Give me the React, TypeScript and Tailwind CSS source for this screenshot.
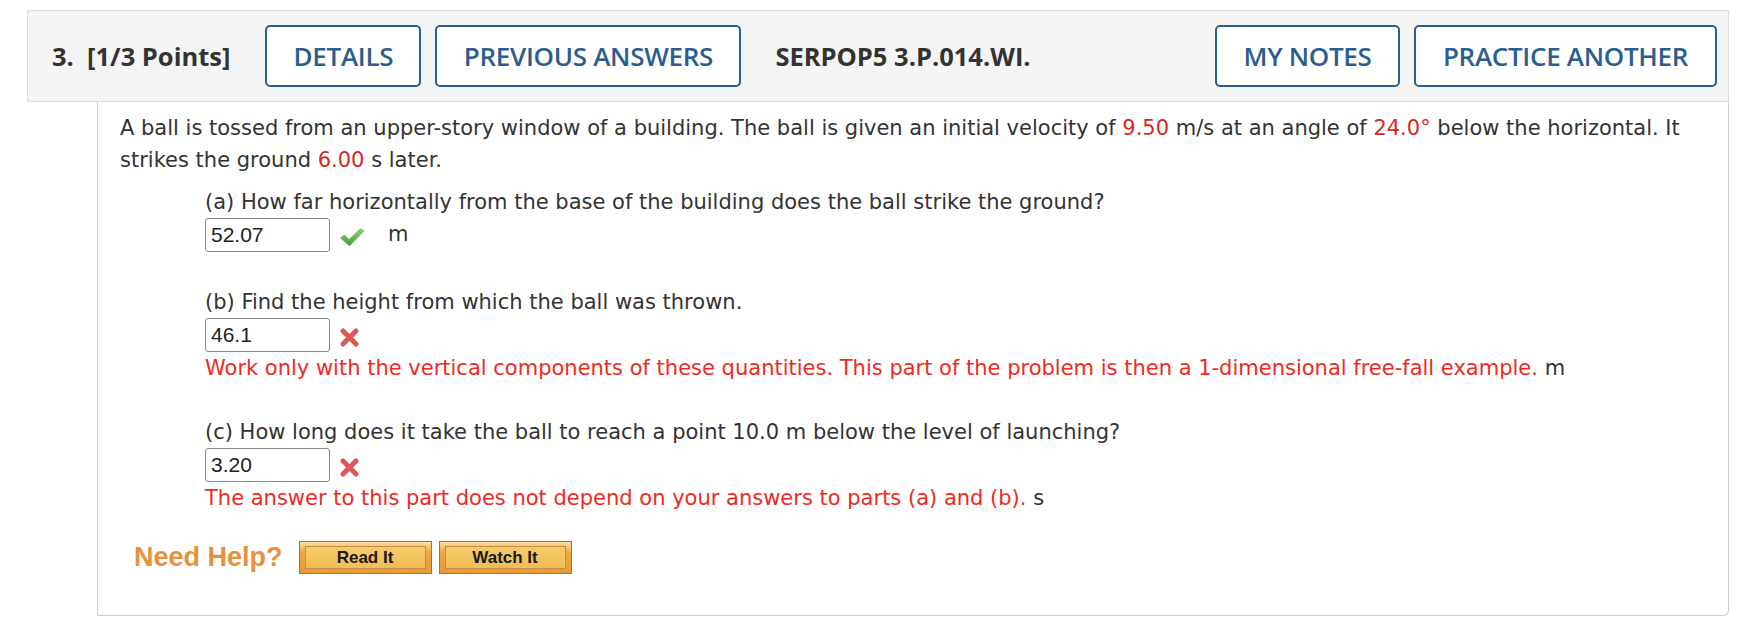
function HeaderButton({ label, width }: { label: string; width: string }) {
  return (
    <button
      className={`${width} h-[62px] rounded-[5px] border-2 border-[#2a5f93] bg-white text-[26px] font-semibold text-[#2b5d8f] tracking-[-0.3px]`}
    >
      {label}
    </button>
  );
}

function CheckIcon() {
  return (
    <svg width="26" height="22" viewBox="0 0 26 22">
      <defs>
        <linearGradient id="chk" x1="0" y1="0" x2="0" y2="1">
          <stop offset="0" stopColor="#93d47e" />
          <stop offset="1" stopColor="#3f9a3b" />
        </linearGradient>
      </defs>
      <path
        d="M1.5 12 L5.5 9 L10 13.5 L21.5 2.5 L25 5 L10.5 20 Z"
        fill="url(#chk)"
        stroke="#5aa94c"
        strokeWidth="0.6"
        strokeLinejoin="round"
      />
    </svg>
  );
}

function CrossIcon() {
  return (
    <svg width="21" height="21" viewBox="0 0 21 21">
      <path
        d="M4 4 L17 17 M17 4 L4 17"
        stroke="#e05656"
        strokeWidth="5"
        strokeLinecap="round"
      />
    </svg>
  );
}

function AnswerBox({ value }: { value: string }) {
  return (
    <div className="w-[125px] h-[34px] rounded-[3px] border border-[#8a8a8a] bg-white px-[5px] flex items-center font-['Liberation_Sans',Arial,sans-serif] text-[21px] text-[#222]">
      {value}
    </div>
  );
}

function HelpButton({ label }: { label: string }) {
  return (
    <button className="w-[133px] h-[33px] border border-[#a8732f] bg-[linear-gradient(#fcdca0,#eda648_35%,#e89a38)] px-[5px] py-[4px]">
      <span className="flex h-full w-full items-center justify-center border border-[#c58b3f] bg-[linear-gradient(#f6cb6c,#f1bd55)] font-['Liberation_Sans',Arial,sans-serif] text-[17px] font-bold text-[#1a1a1a]">
        {label}
      </span>
    </button>
  );
}

export default function App() {
  return (
    <div className="w-[1738px] h-[629px] bg-white pt-[10px] pl-[27px] pr-[9px]">
      <div className="h-[92px] flex items-center border border-[#dcdcdc] bg-[#f5f5f5] pl-[24px] pr-[11px] font-['Open_Sans',sans-serif] text-[#333]">
        <span className="text-[25.5px] font-bold mr-[35px]">3.&nbsp; [1/3 Points]</span>
        <div className="flex gap-[14px]">
          <HeaderButton label="DETAILS" width="w-[156px]" />
          <HeaderButton label="PREVIOUS ANSWERS" width="w-[306px]" />
        </div>
        <span className="ml-[34px] text-[25.5px] font-bold">SERPOP5 3.P.014.WI.</span>
        <div className="ml-auto flex gap-[14px]">
          <HeaderButton label="MY NOTES" width="w-[185px]" />
          <HeaderButton label="PRACTICE ANOTHER" width="w-[303px]" />
        </div>
      </div>

      <div className="ml-[70px] h-[514px] border border-t-0 border-[#cfcfcf] rounded-br-[6px] pl-[22px] pr-[16px] pt-[10px] font-['DejaVu_Sans',Verdana,sans-serif] text-[21px] text-[#333]">
        <p className="leading-[32px]">
          A ball is tossed from an upper-story window of a building. The ball is given an initial velocity of{" "}
          <span className="text-[#d42a20]">9.50</span> m/s at an angle of{" "}
          <span className="text-[#d42a20]">24.0°</span> below the horizontal. It strikes the ground{" "}
          <span className="text-[#d42a20]">6.00</span> s later.
        </p>

        <div className="ml-[85px] mt-[10px]">
          <section>
            <p className="leading-[32px]">(a) How far horizontally from the base of the building does the ball strike the ground?</p>
            <div className="flex items-center">
              <AnswerBox value="52.07" />
              <span className="ml-[9px] mt-[4px]">
                <CheckIcon />
              </span>
              <span className="ml-[23px]">m</span>
            </div>
          </section>

          <section className="mt-[34px]">
            <p className="leading-[32px]">(b) Find the height from which the ball was thrown.</p>
            <div className="flex items-center">
              <AnswerBox value="46.1" />
              <span className="ml-[9px] mt-[4px]">
                <CrossIcon />
              </span>
            </div>
            <p className="leading-[32px]">
              <span className="text-[#ee2b22]">
                Work only with the vertical components of these quantities. This part of the problem is then a 1-dimensional free-fall example.
              </span>{" "}
              m
            </p>
          </section>

          <section className="mt-[32px]">
            <p className="leading-[32px]">(c) How long does it take the ball to reach a point 10.0 m below the level of launching?</p>
            <div className="flex items-center">
              <AnswerBox value="3.20" />
              <span className="ml-[9px] mt-[4px]">
                <CrossIcon />
              </span>
            </div>
            <p className="leading-[32px]">
              <span className="text-[#ee2b22]">
                The answer to this part does not depend on your answers to parts (a) and (b).
              </span>{" "}
              s
            </p>
          </section>
        </div>

        <div className="mt-[23px] ml-[14px] flex items-center">
          <span className="font-['Liberation_Sans',Arial,sans-serif] text-[27px] font-bold text-[#e8913a] mr-[16px]">
            Need Help?
          </span>
          <div className="flex gap-[7px]">
            <HelpButton label="Read It" />
            <HelpButton label="Watch It" />
          </div>
        </div>
      </div>
    </div>
  );
}
